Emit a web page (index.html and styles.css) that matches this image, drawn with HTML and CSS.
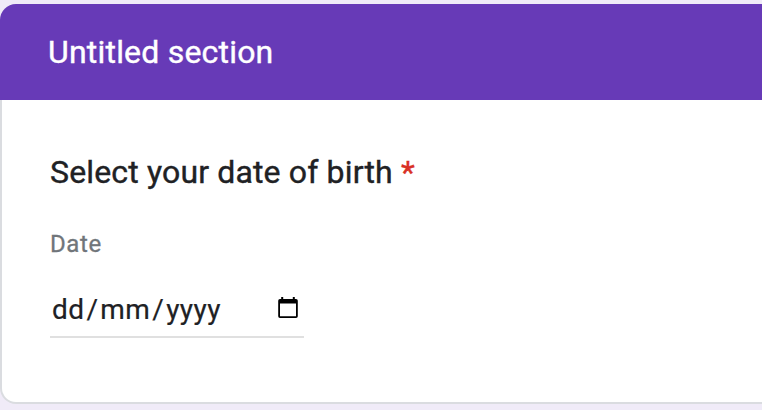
FILE: index.html
```html
<!DOCTYPE html>
<html lang="en">
<head>
  <meta charset="UTF-8">
  <title>Untitled section</title>
  <link rel="stylesheet" href="styles.css">
</head>
<body>
  <div class="card" role="main">
    <h2 class="section-title">Untitled section</h2>
    <div class="question">
      <div class="question-title">Select your date of birth <span class="required">*</span></div>
      <div class="label">Date</div>
      <div class="date-input">
        <span class="date-text"><span>dd</span><span>/</span><span>mm</span><span>/</span><span>yyyy</span></span>
        <svg class="calendar" width="20" height="22" viewBox="0 0 20 22" aria-hidden="true">
          <path fill-rule="evenodd" d="M3.2 0h2v2h9.6V0h2v2H18a1.8 1.8 0 0 1 1.8 1.8v15.4A1.8 1.8 0 0 1 18 21H2a1.8 1.8 0 0 1-1.8-1.8V3.8A1.8 1.8 0 0 1 2 2h1.2zM2 6.4v12.8h16V6.4z"/>
        </svg>
      </div>
    </div>
  </div>
</body>
</html>
```

FILE: styles.css
```css
body {
  margin: 0;
  padding-top: 4px;
  background: #f0ebf8;
  font-family: Roboto, Arial, sans-serif;
  color: #202124;
  overflow: hidden;
}

.card {
  box-sizing: border-box;
  width: 800px;
  height: 400px;
}

.section-title {
  box-sizing: border-box;
  height: 96px;
  margin: 0;
  padding: 24px 48px;
  background: #673ab7;
  border-radius: 16px 0 0 0;
  color: #fff;
  font-size: 32px;
  font-weight: 400;
  letter-spacing: 0.2px;
  line-height: 48px;
  -webkit-text-stroke: 0.4px;
}

.question {
  box-sizing: border-box;
  height: 304px;
  padding: 48px;
  background: #fff;
  border: 2px solid #dadce0;
  border-top: none;
  border-radius: 0 0 0 16px;
}

.question-title {
  font-size: 32px;
  letter-spacing: 0.15px;
  line-height: 48px;
  -webkit-text-stroke: 0.4px;
}

.required {
  color: #d93025;
}

.label {
  margin-top: 32px;
  color: #70757a;
  font-size: 24px;
  letter-spacing: 0.6px;
  line-height: 32px;
  -webkit-text-stroke: 0.3px;
}

.date-input {
  display: flex;
  justify-content: space-between;
  box-sizing: border-box;
  width: 254px;
  height: 78px;
  padding: 36px 6px 0 2px;
  border-bottom: 2px solid #e0e0e0;
}

.date-text {
  display: flex;
  gap: 2px;
  font-size: 28px;
  letter-spacing: 0.4px;
  line-height: 28px;
  -webkit-text-stroke: 0.2px;
}

.calendar {
  margin-top: 1px;
}
```
